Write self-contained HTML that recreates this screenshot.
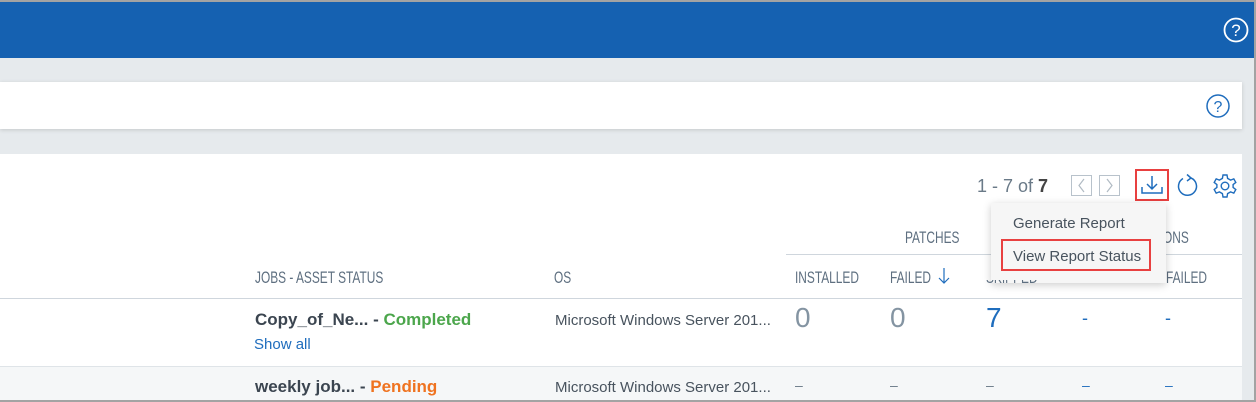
<html><head><style>
body{margin:0;width:1256px;height:402px;overflow:hidden;position:relative;background:#e6eaed;font-family:"Liberation Sans",sans-serif;}
.frame{position:absolute;inset:0;border:2px solid #a3a3a3;border-left:none;box-sizing:border-box;pointer-events:none;z-index:9}
.a{position:absolute;white-space:nowrap}
.h{font-size:17px;color:#5e6f80;transform:scaleX(.7);transform-origin:left center;}
.num{font-size:28px;color:#8494a2;font-weight:300}
.d{color:#6a7a88;font-size:14px}
.b{color:#1f6dbd}
</style></head><body>
<div class="a" style="left:0;top:0;width:1256px;height:58px;background:#1561b1"></div>
<svg class="a" style="left:1222px;top:16px" width="28" height="28" viewBox="0 0 28 28"><circle cx="14" cy="14" r="11.5" fill="none" stroke="#fff" stroke-width="1.8"/><text x="14" y="20" text-anchor="middle" font-size="17" fill="#fff" font-family="Liberation Sans">?</text></svg>
<div class="a" style="left:0;top:82px;width:1242px;height:47px;background:#fff;box-shadow:0 1px 4px rgba(0,0,0,.15)"></div>
<svg class="a" style="left:1205px;top:93px" width="26" height="26" viewBox="0 0 26 26"><circle cx="13" cy="13" r="11" fill="none" stroke="#1f6dbd" stroke-width="1.5"/><text x="13" y="19" text-anchor="middle" font-size="16" fill="#1f6dbd" font-family="Liberation Sans">?</text></svg>
<div class="a" style="left:0;top:154px;width:1242px;height:248px;background:#fff"></div>
<div class="a" style="left:977px;top:176px;font-size:18px;color:#6a7a88">1 - 7 of <b style="color:#444">7</b></div>
<svg class="a" style="left:1071px;top:175px" width="50" height="21" viewBox="0 0 50 21"><rect x="0.5" y="0.5" width="20" height="20" fill="none" stroke="#b8c2cb"/><path d="M13 4l-5 6.5 5 6.5" fill="none" stroke="#b0bac3" stroke-width="1.2"/><rect x="28.5" y="0.5" width="20" height="20" fill="none" stroke="#b8c2cb"/><path d="M36 4l5 6.5-5 6.5" fill="none" stroke="#b0bac3" stroke-width="1.2"/></svg>
<div class="a" style="left:1135px;top:169px;width:34px;height:32px;border:2px solid #e84040;box-sizing:border-box"></div>
<svg class="a" style="left:1140px;top:174px" width="24" height="22" viewBox="0 0 24 22"><path d="M12 2v13M7 10l5 5 5-5M2 13v6h20v-6" fill="none" stroke="#1f6dbd" stroke-width="1.5"/></svg>
<svg class="a" style="left:1176px;top:173px" width="24" height="26" viewBox="0 0 24 26"><path d="M15 5A9 9 0 1 1 7 5.5" fill="none" stroke="#1f6dbd" stroke-width="1.5"/><path d="M11 1.5l4 3.5-4 3" fill="none" stroke="#1f6dbd" stroke-width="1.5"/></svg>
<svg class="a" style="left:1211px;top:173px" width="28" height="26" viewBox="-13 -13 26 26"><path d="M-2,-11L2,-11L2.6,-7.6L5.6,-5.9L8.8,-7.1L10.8,-3.6L8.1,-1.4L8.1,1.4L10.8,3.6L8.8,7.1L5.6,5.9L2.6,7.6L2,11L-2,11L-2.6,7.6L-5.6,5.9L-8.8,7.1L-10.8,3.6L-8.1,1.4L-8.1,-1.4L-10.8,-3.6L-8.8,-7.1L-5.6,-5.9L-2.6,-7.6Z" fill="none" stroke="#1f6dbd" stroke-width="1.4"/><circle r="3.8" fill="none" stroke="#1f6dbd" stroke-width="1.4"/></svg>
<div class="a" style="left:786px;top:254px;width:456px;height:1px;background:#cfd6dd"></div>
<div class="a" style="left:0;top:298px;width:1242px;height:1px;background:#cfd6dd"></div>
<div class="a" style="left:0;top:366px;width:1242px;height:1px;background:#dfe4e8"></div>
<div class="a" style="left:0;top:367px;width:1242px;height:35px;background:#f5f7f8"></div>
<div class="a h" style="left:905px;top:228px">PATCHES</div>
<div class="a h" style="left:1163px;top:228px">ONS</div>
<div class="a h" style="left:255px;top:268px">JOBS - ASSET STATUS</div>
<div class="a h" style="left:554px;top:268px">OS</div>
<div class="a h" style="left:795px;top:268px">INSTALLED</div>
<div class="a h" style="left:890px;top:268px">FAILED</div>
<svg class="a" style="left:937px;top:266px" width="14" height="20" viewBox="0 0 14 20"><path d="M7 2v15M2 12l5 5 5-5" fill="none" stroke="#1f6dbd" stroke-width="1.2"/></svg>
<div class="a h" style="left:1166px;top:268px">FAILED</div>
<div class="a" style="left:255px;top:310px;font-size:17px;font-weight:bold;color:#3b4550">Copy_of_Ne... - <span style="color:#4ca64c">Completed</span></div>
<div class="a b" style="left:254px;top:336px;font-size:15px">Show all</div>
<div class="a" style="left:555px;top:312px;font-size:15px;color:#48535e">Microsoft Windows Server 201...</div>
<div class="a num" style="left:795px;top:302px">0</div>
<div class="a num" style="left:890px;top:302px">0</div>
<div class="a num b" style="left:986px;top:302px;color:#1f6dbd">7</div>
<div class="a b" style="left:1082px;top:308px;font-size:18px">-</div>
<div class="a b" style="left:1165px;top:308px;font-size:18px">-</div>
<div class="a" style="left:255px;top:377px;font-size:17px;font-weight:bold;color:#3b4550">weekly job... - <span style="color:#ef7320">Pending</span></div>
<div class="a" style="left:555px;top:379px;font-size:15px;color:#48535e">Microsoft Windows Server 201...</div>
<div class="a d" style="left:795px;top:377px">–</div>
<div class="a d" style="left:890px;top:377px">–</div>
<div class="a d" style="left:986px;top:377px">–</div>
<div class="a b" style="left:1082px;top:377px;font-size:14px">–</div>
<div class="a b" style="left:1165px;top:377px;font-size:14px">–</div>
<div class="a" style="left:991px;top:203px;width:175px;height:80px;background:#f6f6f6;box-shadow:0 2px 8px rgba(0,0,0,.2)"></div>
<div class="a h" style="left:986px;top:268px;clip-path:inset(12px 0 0 0)">SKIPPED</div>
<div class="a" style="left:1013px;top:215px;font-size:15px;color:#48535e">Generate Report</div>
<div class="a" style="left:1001px;top:239px;width:150px;height:32px;border:2px solid #e84040;box-sizing:border-box"></div>
<div class="a" style="left:1013px;top:248px;font-size:15px;color:#48535e">View Report Status</div>
<div class="frame"></div>
</body></html>
